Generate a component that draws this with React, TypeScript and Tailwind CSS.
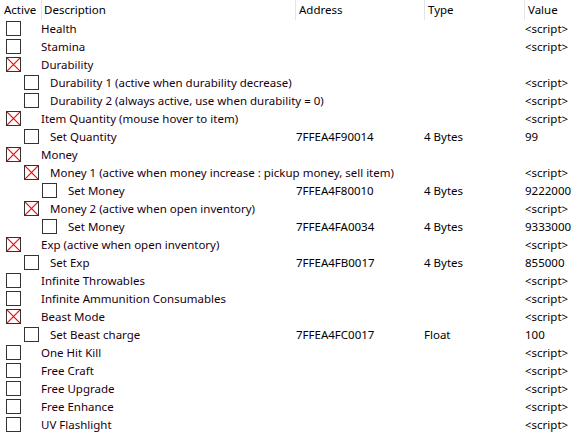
import React from 'react';

type Entry = {
  level: number;
  desc: string;
  checked?: boolean;
  address?: string;
  type?: string;
  value: string;
};

const entries: Entry[] = [
  { level: 0, desc: 'Health', value: '<script>' },
  { level: 0, desc: 'Stamina', value: '<script>' },
  { level: 0, desc: 'Durability', checked: true, value: '' },
  { level: 1, desc: 'Durability 1 (active when durability decrease)', value: '<script>' },
  { level: 1, desc: 'Durability 2 (always active, use when durability = 0)', value: '<script>' },
  { level: 0, desc: 'Item Quantity (mouse hover to item)', checked: true, value: '<script>' },
  { level: 1, desc: 'Set Quantity', address: '7FFEA4F90014', type: '4 Bytes', value: '99' },
  { level: 0, desc: 'Money', checked: true, value: '' },
  { level: 1, desc: 'Money 1 (active when money increase : pickup money, sell item)', checked: true, value: '<script>' },
  { level: 2, desc: 'Set Money', address: '7FFEA4F80010', type: '4 Bytes', value: '9222000' },
  { level: 1, desc: 'Money 2 (active when open inventory)', checked: true, value: '<script>' },
  { level: 2, desc: 'Set Money', address: '7FFEA4FA0034', type: '4 Bytes', value: '9333000' },
  { level: 0, desc: 'Exp (active when open inventory)', checked: true, value: '<script>' },
  { level: 1, desc: 'Set Exp', address: '7FFEA4FB0017', type: '4 Bytes', value: '855000' },
  { level: 0, desc: 'Infinite Throwables', value: '<script>' },
  { level: 0, desc: 'Infinite Ammunition Consumables', value: '<script>' },
  { level: 0, desc: 'Beast Mode', checked: true, value: '<script>' },
  { level: 1, desc: 'Set Beast charge', address: '7FFEA4FC0017', type: 'Float', value: '100' },
  { level: 0, desc: 'One Hit Kill', value: '<script>' },
  { level: 0, desc: 'Free Craft', value: '<script>' },
  { level: 0, desc: 'Free Upgrade', value: '<script>' },
  { level: 0, desc: 'Free Enhance', value: '<script>' },
  { level: 0, desc: 'UV Flashlight', value: '<script>' },
];

const boxPad = ['pl-[6px]', 'pl-[24px]', 'pl-[42px]'];
const textGap = ['ml-[20px]', 'ml-[11px]', 'ml-[11px]'];

function CheckBox({ checked }: { checked?: boolean }) {
  return (
    <div className="w-[15px] h-[15px] mt-[2px] border border-[#333] bg-white shrink-0 relative">
      {checked && (
        <svg className="absolute inset-0" width="13" height="13" viewBox="0 0 13 13">
          <path d="M0 0 L13 13 M13 0 L0 13" stroke="#ff0000" strokeWidth="1.2" fill="none" />
        </svg>
      )}
    </div>
  );
}

export default function App() {
  return (
    <div
      className="w-[582px] h-[445px] bg-white overflow-hidden text-[11.5px] text-black"
      style={{ fontFamily: '"Noto Sans", "Open Sans", sans-serif' }}
    >
      {/* Header */}
      <div className="grid grid-cols-[41px_254px_129px_100px_1fr] h-[19px] leading-[20px]">
        <div className="pl-[4px]">Active</div>
        <div className="border-l border-[#e5e5e5] pl-[2px]">Description</div>
        <div className="border-l border-[#e5e5e5] pl-[3px]">Address</div>
        <div className="border-l border-[#e5e5e5] pl-[3px]">Type</div>
        <div className="border-l border-[#e5e5e5] pl-[3px]">Value</div>
      </div>

      {/* Rows */}
      {entries.map((e, i) => (
        <div key={i} className="grid grid-cols-[295px_129px_100px_1fr] h-[18px] leading-[19px]">
          <div className={`flex items-start whitespace-nowrap ${boxPad[e.level]}`}>
            <CheckBox checked={e.checked} />
            <span className={`${textGap[e.level]} text-[#1a0010]`}>{e.desc}</span>
          </div>
          <div className="pl-[1px]">{e.address}</div>
          <div>{e.type}</div>
          <div className="pl-[1px]">{e.value}</div>
        </div>
      ))}
    </div>
  );
}
